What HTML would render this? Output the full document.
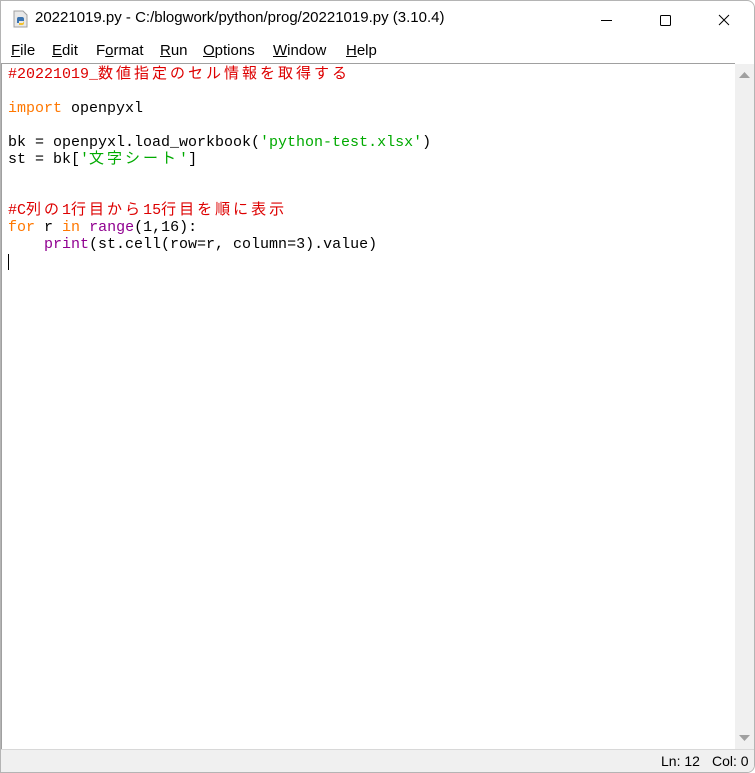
<!DOCTYPE html>
<html><head><meta charset="utf-8"><style>
body{margin:0;width:755px;height:773px;overflow:hidden;background:#fff;font-family:"Segoe UI","Liberation Sans","Noto Sans CJK JP",sans-serif;}
.win{position:absolute;left:0;top:0;width:753px;height:771px;border:1px solid #b4b4b4;border-radius:0 8px 8px 0;background:#fff;overflow:hidden}
.title{position:absolute;left:34px;top:8px;font-size:15px;color:#000}
.menu{position:absolute;top:41px;left:10px;font-size:15px;color:#000}
.menu span{position:absolute;white-space:nowrap}
.menu u{text-decoration:underline}
.edit{position:absolute;left:0;top:62px;width:733px;height:685px;border-top:1px solid #a0a0a0;border-left:1px solid #a0a0a0}
pre{margin:0;position:absolute;left:6px;top:2px;font-family:"Liberation Mono","Noto Sans CJK JP",monospace;font-size:15px;line-height:17px;color:#000}
.j{letter-spacing:3px}
.c{color:#dd0000}.k{color:#ff7700}.s{color:#00aa00}.b{color:#900090}
.sb{position:absolute;left:734px;top:63px;width:19px;height:685px;background:#f0f0f0}
.status{position:absolute;left:0;top:748px;width:755px;height:25px;background:#f0f0f0;border-top:1px solid #d8d8d8;font-size:14px}
</style></head><body><div class="win">
<svg style="position:absolute;left:11px;top:9px" width="18" height="18" viewBox="0 0 18 18">
<path d="M2 1h9l4 4v12H2z" fill="#e8e8e8" stroke="#a0a0a0"/>
<path d="M6 7h4a2 2 0 0 1 2 2v2H7v2H5V9a2 2 0 0 1 1-2z" fill="#3a73b0"/>
<path d="M12 11v2a2 2 0 0 1-2 2H7v-2h4z" fill="#f2c12e"/>
</svg>
<div class="title">20221019.py - C:/blogwork/python/prog/20221019.py (3.10.4)</div>
<svg style="position:absolute;left:600px;top:10px" width="140" height="20">
<path d="M0 9.5h11" stroke="#000" stroke-width="1"/>
<rect x="59.5" y="4.5" width="10" height="10" fill="none" stroke="#000" rx="1"/>
<path d="M118 4l10 10M128 4l-10 10" stroke="#000"/>
</svg>
<div class="menu">
<span style="left:0"><u>F</u>ile</span>
<span style="left:41px"><u>E</u>dit</span>
<span style="left:85px">F<u>o</u>rmat</span>
<span style="left:149px"><u>R</u>un</span>
<span style="left:192px"><u>O</u>ptions</span>
<span style="left:262px"><u>W</u>indow</span>
<span style="left:335px"><u>H</u>elp</span>
</div>
<div class="edit"><pre><span class="c">#20221019_<span class="j">数値指定のセル情報を取得する</span></span>

<span class="k">import</span> openpyxl

bk = openpyxl.load_workbook(<span class="s">'python-test.xlsx'</span>)
st = bk[<span class="s">'<span class="j">文字シート</span>'</span>]


<span class="c">#C<span class="j">列の</span>1<span class="j">行目から</span>15<span class="j">行目を順に表示</span></span>
<span class="k">for</span> r <span class="k">in</span> <span class="b">range</span>(1,16):
    <span class="b">print</span>(st.cell(row=r, column=3).value)
</pre>
<div style="position:absolute;left:6px;top:190px;width:1px;height:16px;background:#000"></div>
</div>
<div class="sb">
<svg width="19" height="685"><path d="M4 14h11l-5.5-6z" fill="#a0a0a0"/><path d="M4 671h11l-5.5 6z" fill="#a0a0a0"/></svg>
</div>
<div class="status"><span style="position:absolute;left:660px;top:3px">Ln: 12</span><span style="position:absolute;left:711px;top:3px">Col: 0</span></div>
</div></body></html>
